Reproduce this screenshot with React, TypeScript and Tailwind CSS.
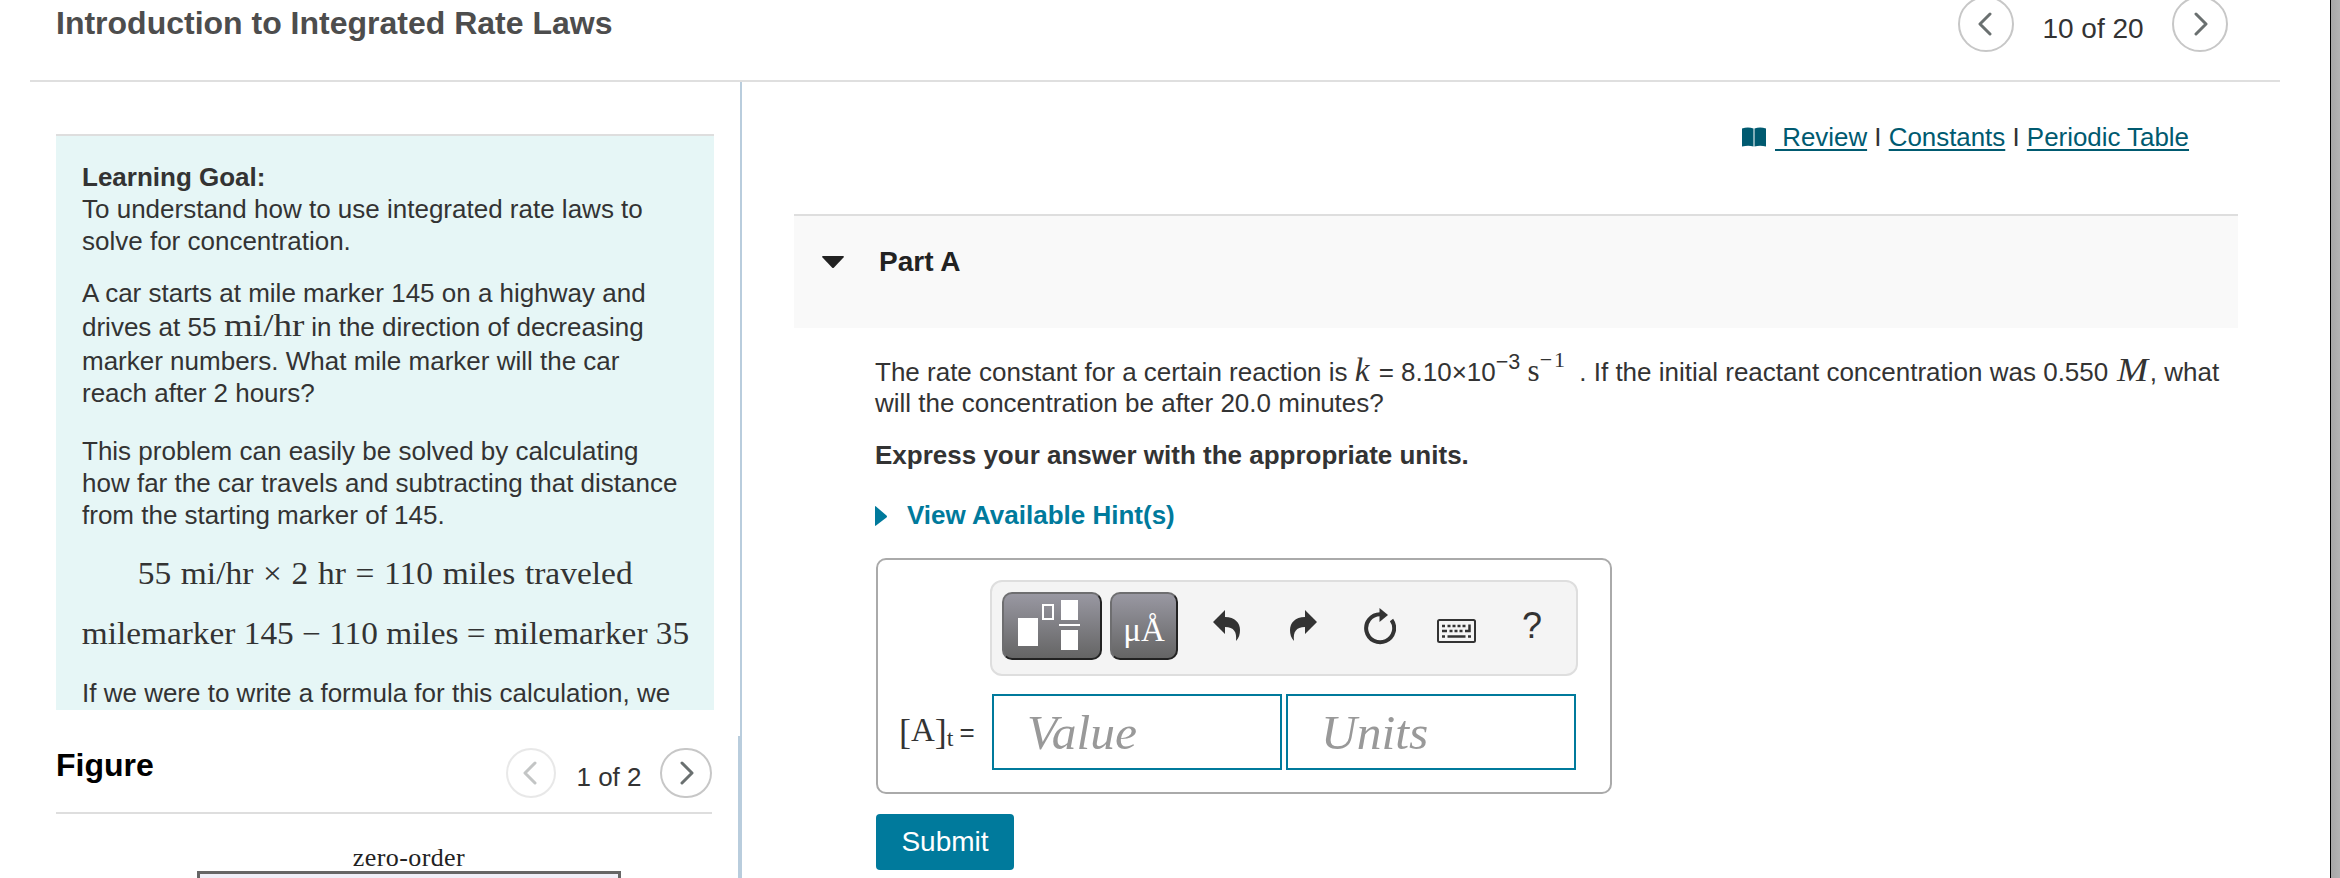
import type { ReactNode } from 'react';

const sans = "font-['Liberation_Sans',Arial,sans-serif]";

// zero leading keeps the larger serif glyphs from stretching the line they sit in
function Tex({ children, className = '' }: { children: ReactNode; className?: string }) {
  return <span className={`font-['Liberation_Serif',serif] leading-[0] ${className}`}>{children}</span>;
}

function PagerButton({ dir, className = '' }: { dir: 'prev' | 'next'; className?: string }) {
  return (
    <button
      className={`flex shrink-0 items-center justify-center rounded-full border-2 border-[#c7c7c7] text-[#6a7070] ${className}`}
      aria-label={dir === 'prev' ? 'Previous' : 'Next'}
    >
      <svg className="h-6 w-4" viewBox="0 0 16 24" fill="none" stroke="currentColor" strokeWidth="3" strokeLinecap="round" strokeLinejoin="round">
        {dir === 'prev' ? <path d="M12 2L2 12l10 10" /> : <path d="M4 2l10 10L4 22" />}
      </svg>
    </button>
  );
}

function Header() {
  return (
    <header className="ml-[30px] flex h-[82px] w-[2250px] items-start justify-between border-b-2 border-[#dfdfdf] pr-[52px] pl-[26px]">
      <h1 className="mt-[5px] text-[32px] leading-9 font-bold whitespace-nowrap text-[#4d4d4d]">
        Introduction to Integrated Rate Laws
      </h1>
      <div className="-mt-1 flex h-14 items-center">
        <PagerButton dir="prev" className="h-14 w-14" />
        <span className="mt-2.5 w-[158px] text-center text-[28px] leading-8 text-[#333]">10 of 20</span>
        <PagerButton dir="next" className="h-14 w-14" />
      </div>
    </header>
  );
}

function LearningGoal() {
  return (
    <section className="mt-[52px] h-[576px] w-[658px] overflow-hidden border-t-2 border-[#dedede] bg-[#e6f6f6] pt-[25px] pl-[26px] text-[26px] leading-8 whitespace-nowrap text-[#333]">
      <p className="font-bold">Learning Goal:</p>
      <p>To understand how to use integrated rate laws to</p>
      <p>solve for concentration.</p>
      <p className="mt-5">A car starts at mile marker 145 on a highway and</p>
      <p className="mt-0.5">
        drives at 55 <Tex className="mr-[11px] inline-block origin-left scale-x-[1.16] text-[32px]">mi/hr</Tex> in the direction of decreasing
      </p>
      <p className="mt-0.5">marker numbers. What mile marker will the car</p>
      <p>reach after 2 hours?</p>
      <p className="mt-[26px]">This problem can easily be solved by calculating</p>
      <p>how far the car travels and subtracting that distance</p>
      <p>from the starting marker of 145.</p>
      <p className="mt-7 h-8 w-[606px] text-center">
        <Tex className="inline-block scale-x-[1.08] text-[31px] [word-spacing:1.2px]">55 mi/hr × 2 hr = 110 miles traveled</Tex>
      </p>
      <p className="mt-7 h-8 w-[606px] text-center">
        <Tex className="inline-block scale-x-[1.075] text-[31px]">milemarker 145 − 110 miles = milemarker 35</Tex>
      </p>
      <p className="mt-[26px]">If we were to write a formula for this calculation, we</p>
    </section>
  );
}

function Figure() {
  return (
    <section>
      <div className="mt-[26px] flex h-[78px] w-[656px] justify-between border-b-2 border-[#dedede]">
        <h2 className="mt-[11px] text-[32px] leading-9 font-bold text-black">Figure</h2>
        <div className="mt-3 flex h-[50px] items-center">
          <PagerButton dir="prev" className="h-[50px] w-[50px] opacity-40" />
          <span className="mt-2 w-[104px] pl-0.5 text-center text-[26px] text-[#333]">1 of 2</span>
          <PagerButton dir="next" className="h-[50px] w-[52px]" />
        </div>
      </div>
      <div className="ml-[141px] w-[424px]">
        <p className="mt-[31px] mb-0.5 h-6 text-center text-[26px] leading-6 text-[#222]">
          <Tex className="tracking-[0.4px]">zero-order</Tex>
        </p>
        <div className="h-10 border-[3px] border-[#666] bg-[#f0eff8]" />
      </div>
    </section>
  );
}

function Toolbar() {
  return (
    <div className="flex h-24 w-[588px] rounded-xl border-2 border-[#dedede] bg-[#f4f4f4] pt-2.5 pl-2.5 text-[#333]">
      <button className="flex h-[68px] w-[100px] items-center justify-center rounded-[10px] border-2 border-t-[#6e6e70] border-r-[#222] border-b-[#222] border-l-[#6e6e70] bg-linear-to-b from-[#9998a2] to-[#656565]">
        <svg className="h-16 w-24 shrink-0" viewBox="0 0 96 64" fill="white">
          <rect x="14" y="24" width="20" height="28" />
          <rect x="39" y="11" width="10" height="14" fill="none" stroke="white" strokeWidth="2" />
          <rect x="57" y="6" width="17" height="20" />
          <rect x="55" y="30" width="21" height="2" />
          <rect x="57" y="36" width="17" height="20" />
        </svg>
      </button>
      <button className="ml-2 h-[68px] w-[68px] rounded-[10px] border-2 border-t-[#6e6e70] border-r-[#222] border-b-[#222] border-l-[#6e6e70] bg-linear-to-b from-[#9998a2] to-[#656565] pt-2 text-[33px] leading-10 text-white">
        <Tex>μÅ</Tex>
      </button>
      <svg className="mt-[18px] ml-[35px] h-8 w-[27px]" viewBox="0 0 27 32" fill="currentColor">
        <path d="M0 12L12 0v7c10 0 15 6 15 13 0 4-1 8-4 11 1-9-2-14-11-14v7z" />
      </svg>
      <svg className="mt-[18px] ml-[50px] h-8 w-[27px]" viewBox="0 0 27 32" fill="currentColor">
        <path d="M27 12L15 0v7C5 7 0 13 0 20c0 4 1 8 4 11-1-9 2-14 11-14v7z" />
      </svg>
      <svg className="mt-4 ml-[47px] h-[38px] w-8" viewBox="0 0 32 38" fill="none" stroke="currentColor" strokeWidth="4">
        <path d="M27.500 12A14 14 0 1 1 16 6.200" />
        <path d="M15.500 0l8.500 7-8.500 7z" fill="currentColor" stroke="none" />
      </svg>
      <svg className="mt-[27px] ml-[41px] h-6 w-[39px]" viewBox="0 0 39 24" fill="none" stroke="currentColor" strokeWidth="2">
        <rect x="1" y="1" width="37" height="22" rx="1.500" />
        <path d="M5 7h3M10.500 7h3M15.500 7h3M20.500 7h3M25.500 7h3" strokeWidth="2.500" />
        <path d="M5 12h5M12.500 12h3M17.500 12h3M22.500 12h3" strokeWidth="2.500" />
        <path d="M32.500 5.500v6.500h-4.500" strokeWidth="2.500" />
        <path d="M5 17.500h3M10.500 17.500h18M31 17.500h3" strokeWidth="2.500" />
      </svg>
      <span className="mt-3 ml-[46px] text-[36px] leading-[44px]">?</span>
    </div>
  );
}

function AnswerBox() {
  return (
    <div className="mt-[27px] h-[236px] w-[736px] rounded-[10px] border-2 border-[#aaa] pt-5">
      <div className="pl-28">
        <Toolbar />
      </div>
      <div className="mt-[18px] flex items-center gap-1 text-[#333]">
        <div className="w-[110px] pl-[21px] text-[33px] leading-10 whitespace-nowrap">
          <Tex className="relative top-px text-[36px]">[</Tex>
          <Tex className="relative -top-0.5">A</Tex>
          <Tex className="relative top-px text-[36px]">]</Tex>
          <Tex className="relative top-[3px] text-[24px]">t</Tex>
          <span className="relative -top-0.5 ml-1.5 text-[26px] leading-none">=</span>
        </div>
        <div className="flex h-[76px] w-[290px] items-center border-2 border-[#007a9c] pt-px pl-[33px] text-[49.500px] text-[#999] italic">
          <Tex>Value</Tex>
        </div>
        <div className="flex h-[76px] w-[290px] items-center border-2 border-[#007a9c] pt-px pl-[33px] text-[49.500px] text-[#999] italic">
          <Tex>Units</Tex>
        </div>
      </div>
    </div>
  );
}

function Links() {
  return (
    <nav className="mt-[39px] ml-[1000px] flex h-8 items-center text-[25.900px] whitespace-pre text-[#333]">
      <svg className="mr-[9px] h-5 w-6" viewBox="0 0 24 20" fill="#005a70">
        <path d="M0 1.500q6-2 11.500 0v18q-5-1.500-11.500 0zM12.500 1.500q5.500-2 11.500 0v18q-6-1.500-11.500 0z" />
      </svg>
      <a className="text-[#005a70] underline decoration-2 underline-offset-3"> Review</a>
      <span> I </span>
      <a className="text-[#005a70] underline decoration-2 underline-offset-3">Constants</a>
      <span> I </span>
      <a className="text-[#005a70] underline decoration-2 underline-offset-3">Periodic Table</a>
    </nav>
  );
}

export default function App() {
  return (
    <div className={`${sans} flex h-[878px] w-[2340px] overflow-hidden bg-white`}>
      <div className="w-[2330px] shrink-0">
        <Header />
        <div className="flex">
          <aside className="w-[738px] shrink-0 pl-14">
            <LearningGoal />
            <Figure />
          </aside>
          <div className="flex h-[796px] w-1 shrink-0 flex-col items-end">
            <div className="h-[654px] w-0.5 bg-[#b9cddd]" />
            <div className="w-1 flex-1 bg-[#b9cddd]" />
          </div>
          <main className="w-[1588px]">
            <Links />
            <div className="mt-[61px] ml-[52px] flex h-[114px] w-[1444px] border-t-2 border-[#dedede] bg-[#f9f9f9] pl-7 text-[#222]">
              <svg className="mt-10 h-3 w-[22px]" viewBox="0 0 22 12" fill="currentColor">
                <path d="M1 0h20q1.500 0 .5 1.500L12 11.500q-1 1-2 0L.5 1.500Q-.5 0 1 0z" />
              </svg>
              <h2 className="mt-[30px] ml-[35px] text-[28px] leading-8 font-bold">Part A</h2>
            </div>
            <div className="ml-[133px] pt-[29px] text-[26px] leading-[31px] whitespace-nowrap text-[#333]">
              <p className="h-[31px]">
                The rate constant for a certain reaction is <Tex className="mr-0.5 text-[33px] italic">k</Tex> = 8.10×10
                <span className="relative -top-3 text-[21.500px] leading-[0]">−3</span>{' '}
                <Tex className="text-[31px]">s</Tex>
                <Tex className="relative -top-3.5 text-[22px] tracking-[2px]">−1</Tex>
                <span className="ml-[5px]"> . If the initial reactant concentration was 0.550 </span>
                <Tex className="mr-1 ml-0.5 inline-block origin-left scale-x-110 text-[34px] italic">M</Tex>, what
              </p>
              <p>will the concentration be after 20.0 minutes?</p>
              <p className="mt-[21px] font-bold">Express your answer with the appropriate units.</p>
              <div className="mt-[29px] flex items-center gap-5 font-bold text-[#007a9c]">
                <svg className="h-5 w-3" viewBox="0 0 12 20" fill="currentColor">
                  <path d="M0 1Q0-.5 1 .5l10.500 9q1 1 0 2L1 19.500q-1 1-1-.5z" />
                </svg>
                View Available Hint(s)
              </div>
            </div>
            <div className="ml-[134px] whitespace-nowrap">
              <AnswerBox />
              <button className="mt-5 h-14 w-[138px] rounded bg-[#007a9c] text-[28px] text-white">Submit</button>
            </div>
          </main>
        </div>
      </div>
      <div className="w-2.5 border-l border-black bg-linear-to-r from-[#a6a6a6] to-[#b2b2b2]" />
    </div>
  );
}
